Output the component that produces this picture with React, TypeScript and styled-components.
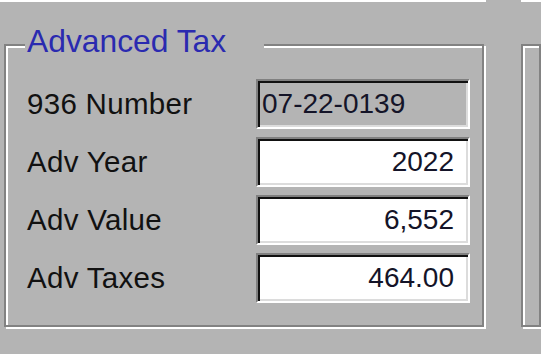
import React from 'react';
import styled, { createGlobalStyle } from 'styled-components';

const GlobalStyle = createGlobalStyle`
  html, body {
    margin: 0;
    padding: 0;
    background: #b4b4b4;
  }
`;

const Screen = styled.div`
  width: 541px;
  height: 354px;
  overflow: hidden;
  background: #b4b4b4;
  font-family: 'Liberation Sans', Arial, sans-serif;
  color: #111;
`;

const TopEdges = styled.div`
  display: flex;
  gap: 35px;
  height: 2px;
  margin-bottom: 42px;
`;

const TopEdge = styled.div<{ $width?: number }>`
  height: 2px;
  background: #ffffff;
  ${(p) => (p.$width ? `width: ${p.$width}px;` : 'flex: 1;')}
`;

const GroupRow = styled.div`
  display: flex;
  gap: 37px;
  padding-left: 4px;
`;

const GroupBox = styled.section<{ $width?: number }>`
  position: relative;
  box-sizing: border-box;
  height: 283px;
  border: 2px solid #828282;
  box-shadow: inset 2px 2px 0 #ffffff, 2px 2px 0 #ffffff;
  ${(p) => (p.$width ? `width: ${p.$width}px; flex: none;` : 'flex: 1;')}
`;

const Legend = styled.div`
  position: absolute;
  left: 19px;
  top: -24px;
  width: 237px;
  padding-left: 2px;
  background: #b4b4b4;
  color: #2a2ab0;
  font-size: 31.8px;
  line-height: 38px;
  white-space: nowrap;
`;

const Form = styled.div`
  display: grid;
  grid-template-columns: 229px 214px;
  grid-auto-rows: 50px;
  row-gap: 8px;
  padding: 33px 12px 0 21px;
`;

const Label = styled.div`
  display: flex;
  align-items: center;
  font-size: 29.5px;
  letter-spacing: 0.3px;
  white-space: nowrap;
`;

const Field = styled.div<{ $readOnly?: boolean; $align?: 'left' | 'right' }>`
  box-sizing: border-box;
  display: flex;
  align-items: center;
  justify-content: ${(p) => (p.$align === 'left' ? 'flex-start' : 'flex-end')};
  padding: 0 14px 0 4px;
  background: ${(p) => (p.$readOnly ? '#b4b4b4' : '#ffffff')};
  border-top: 2px solid #808080;
  border-left: 2px solid #808080;
  border-right: 2px solid #ffffff;
  border-bottom: 2px solid #ffffff;
  box-shadow: inset 2px 2px 0 #111111, inset -2px -2px 0 #dcdcdc;
  font-size: 28px;
  color: #141428;
  white-space: nowrap;
`;

const rows = [
  { label: '936 Number', value: '07-22-0139', readOnly: true, align: 'left' as const },
  { label: 'Adv Year', value: '2022' },
  { label: 'Adv Value', value: '6,552' },
  { label: 'Adv Taxes', value: '464.00' },
];

export default function App() {
  return (
    <Screen>
      <GlobalStyle />
      <TopEdges>
        <TopEdge $width={486} />
        <TopEdge />
      </TopEdges>
      <GroupRow>
        <GroupBox $width={480}>
          <Legend>Advanced Tax</Legend>
          <Form>
            {rows.map((r) => (
              <React.Fragment key={r.label}>
                <Label>{r.label}</Label>
                <Field $readOnly={r.readOnly} $align={r.align}>
                  {r.value}
                </Field>
              </React.Fragment>
            ))}
          </Form>
        </GroupBox>
        <GroupBox />
      </GroupRow>
    </Screen>
  );
}
